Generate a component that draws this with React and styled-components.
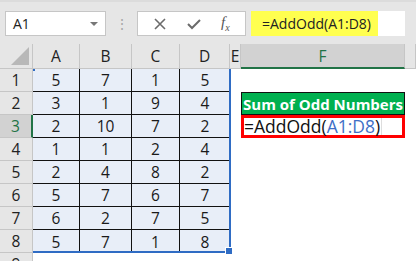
import React from 'react'
import styled, { createGlobalStyle } from 'styled-components'

const GlobalStyle = createGlobalStyle`
  body {
    margin: 0;
    background: #fff;
    overflow: hidden;
    font-family: 'Open Sans', 'Liberation Sans', sans-serif;
  }
`

const data = [
  [5, 7, 1, 5],
  [3, 1, 9, 4],
  [2, 10, 7, 2],
  [1, 1, 2, 4],
  [2, 4, 8, 2],
  [5, 7, 6, 7],
  [6, 2, 7, 5],
  [5, 7, 1, 8],
]

const columns = ['A', 'B', 'C', 'D', 'E', 'F']

export default function App() {
  return (
    <>
      <GlobalStyle />
      <Page>
        <Toolbar>
          <NameBox>
            <span>A1</span>
            <Caret />
          </NameBox>
          <Dots>⋮</Dots>
          <IconBox>
            <svg width="14" height="14" viewBox="0 0 14 14">
              <path d="M2 2 L12 12 M12 2 L2 12" stroke="#6b6b6b" strokeWidth="1.6" />
            </svg>
            <svg width="16" height="14" viewBox="0 0 16 14">
              <path d="M2 7 L6 11 L14 3" stroke="#6b6b6b" strokeWidth="2" fill="none" />
            </svg>
            <Fx>f<sub>x</sub></Fx>
          </IconBox>
          <FormulaBox>
            <Highlight>=AddOdd(A1:D8)</Highlight>
          </FormulaBox>
          <Rest />
        </Toolbar>
        <Sheet>
          <Corner>
            <svg width="20" height="20" viewBox="0 0 20 20">
              <path d="M19 1 L19 19 L1 19 Z" fill="#b8b8b8" />
            </svg>
          </Corner>
          {columns.map((c) => (
            <ColHead key={c} active={c === 'F'}>{c}</ColHead>
          ))}
          <ColHead />
          {data.map((row, i) => (
            <React.Fragment key={i}>
              <RowHead active={i === 2}>{i + 1}</RowHead>
              {row.map((v, j) => (
                <Cell key={j} last={j === 3} bottom={i === 7}>{v}</Cell>
              ))}
              <Blank />
              {i === 1 ? (
                <TitleCell>Sum of Odd Numbers</TitleCell>
              ) : i === 2 ? (
                <FormulaCell>
                  =AddOdd(<Ref>A1:D8</Ref>)<Cursor />
                </FormulaCell>
              ) : (
                <Blank />
              )}
              <Blank />
            </React.Fragment>
          ))}
          <RowHead>9</RowHead>
          <Selection>
            <Handle />
            <TopMark />
          </Selection>
        </Sheet>
      </Page>
    </>
  )
}

const Page = styled.div`
  width: 416px;
  height: 261px;
  overflow: hidden;
  position: relative;
`

const Toolbar = styled.div`
  height: 44px;
  background: #e6e6e6;
  border-top: 2px solid #dcdcdc;
  box-sizing: border-box;
  display: flex;
  align-items: flex-start;
  padding-top: 9px;
  padding-left: 5px;
`

const NameBox = styled.div`
  width: 101px;
  height: 25px;
  box-sizing: border-box;
  background: #fff;
  border: 1px solid #c6c6c6;
  display: flex;
  align-items: center;
  justify-content: space-between;
  padding: 0 7px 0 7px;
  font-size: 14px;
  color: #222;
`

const Caret = styled.span`
  width: 0;
  height: 0;
  border-left: 4px solid transparent;
  border-right: 4px solid transparent;
  border-top: 4px solid #777;
`

const Dots = styled.div`
  width: 31px;
  text-align: center;
  color: #a8a8a8;
  font-size: 14px;
  line-height: 25px;
`

const IconBox = styled.div`
  width: 109px;
  height: 25px;
  box-sizing: border-box;
  background: #fff;
  border: 1px solid #c6c6c6;
  display: flex;
  align-items: center;
  justify-content: space-around;
  padding: 0 6px;
`

const Fx = styled.span`
  font-family: 'Liberation Serif', serif;
  font-style: italic;
  font-size: 15px;
  color: #555;
  sub {
    font-size: 10px;
  }
`

const FormulaBox = styled.div`
  margin-left: 5px;
  width: 154px;
  height: 25px;
  background: #fff;
  display: flex;
`

const Highlight = styled.div`
  width: 127px;
  background: #ffff4f;
  font-size: 14px;
  line-height: 25px;
  padding-left: 11px;
  box-sizing: border-box;
  color: #222;
`

const Rest = styled.div`
  flex: 1;
`

const Sheet = styled.div`
  position: relative;
  display: grid;
  grid-template-columns: 33px 47px 52px 48px 50px 11px 164px 1fr;
  grid-template-rows: 25px repeat(8, 23px) 23px;
  font-size: 15.5px;
  color: #1a1a1a;
`

const Corner = styled.div`
  background: #e6e6e6;
  border-right: 1px solid #c6c6c6;
  border-bottom: 1px solid #c6c6c6;
  display: flex;
  align-items: flex-end;
  justify-content: flex-end;
  padding: 0 2px 2px 0;
`

const ColHead = styled.div`
  background: ${(p) => (p.active ? '#d2d2d2' : '#e6e6e6')};
  color: ${(p) => (p.active ? '#217346' : '#222')};
  border-right: 1px solid #c6c6c6;
  border-bottom: ${(p) => (p.active ? '2px solid #217346' : '1px solid #c6c6c6')};
  display: flex;
  align-items: center;
  justify-content: center;
  overflow: hidden;
`

const RowHead = styled.div`
  background: ${(p) => (p.active ? '#d2d2d2' : '#e6e6e6')};
  color: ${(p) => (p.active ? '#217346' : '#222')};
  border-right: ${(p) => (p.active ? '2px solid #217346' : '1px solid #c6c6c6')};
  border-bottom: 1px solid #c6c6c6;
  display: flex;
  align-items: center;
  justify-content: center;
`

const Cell = styled.div`
  background: #e8eef8;
  border-right: ${(p) => (p.last ? 'none' : '1px solid #111')};
  border-bottom: ${(p) => (p.bottom ? 'none' : '1px solid #111')};
  display: flex;
  align-items: center;
  justify-content: center;
`

const Blank = styled.div`
  background: #fff;
`

const TitleCell = styled.div`
  background: #00b050;
  border: 1px solid #111;
  color: #fff;
  font-weight: 700;
  display: flex;
  align-items: center;
  justify-content: center;
  font-size: 15px;
`

const FormulaCell = styled.div`
  border: 3px solid #ff0000;
  display: flex;
  align-items: center;
  font-size: 17.5px;
  line-height: 17px;
  color: #111;
  white-space: nowrap;
`

const Ref = styled.span`
  color: #3f6fc6;
`

const Cursor = styled.span`
  width: 1px;
  height: 17px;
  background: #ddd;
  margin-left: 1px;
`

const Selection = styled.div`
  position: absolute;
  left: 33px;
  top: 25px;
  width: 198px;
  height: 184px;
  border-right: 2px solid #2f6cc4;
  border-bottom: 2px solid #2f6cc4;
  box-sizing: border-box;
  pointer-events: none;
`

const Handle = styled.div`
  position: absolute;
  right: -4px;
  bottom: -4px;
  width: 6px;
  height: 6px;
  background: #2f6cc4;
  border: 1px solid #fff;
`

const TopMark = styled.div`
  position: absolute;
  left: 0;
  top: 0;
  width: 2px;
  height: 2px;
  background: #2f6cc4;
`
